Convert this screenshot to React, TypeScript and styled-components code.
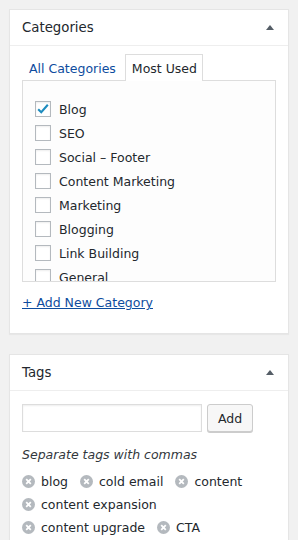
import React from "react";
import styled, { createGlobalStyle } from "styled-components";

const GlobalStyle = createGlobalStyle`
  html, body {
    margin: 0;
    padding: 0;
    background: #f1f1f1;
    font-family: "DejaVu Sans", "Liberation Sans", sans-serif;
    color: #32373c;
  }
`;

const Page = styled.div`
  padding: 9px 9px 0;
`;

/**
 * Meta box
 */
const Box = styled.div`
  background: #fff;
  border: 1px solid #e5e5e5;
  box-shadow: 0 1px 1px rgba(0, 0, 0, 0.04);
  margin-bottom: 20px;
`;

const BoxHeader = styled.div`
  display: flex;
  align-items: center;
  justify-content: space-between;
  height: 35px;
  padding: 0 14px 0 12px;
  border-bottom: 1px solid #eee;
`;

const BoxTitle = styled.h2`
  margin: 0;
  font-size: 13.3px;
  font-weight: 400;
  color: #23282d;
`;

const Toggle = styled.span`
  width: 0;
  height: 0;
  border-left: 4px solid transparent;
  border-right: 4px solid transparent;
  border-bottom: 5px solid #555d66;
`;

const BoxBody = styled.div<{ $top: number; $bottom: number }>`
  padding: ${(p) => p.$top}px 12px ${(p) => p.$bottom}px;
  font-size: 12.5px;
`;

/**
 * Categories
 */
const Tabs = styled.div`
  display: flex;
  align-items: flex-end;
  height: 27px;
  gap: 3px;
`;

const Tab = styled.div<{ $active?: boolean }>`
  height: 27px;
  box-sizing: border-box;
  display: flex;
  align-items: center;
  padding: 0 5px 0 6px;
  color: ${(p) => (p.$active ? "#23282d" : "#0e4c9e")};
  background: ${(p) => (p.$active ? "#fff" : "transparent")};
  border: 1px solid ${(p) => (p.$active ? "#ddd" : "transparent")};
  border-bottom: none;
  margin-bottom: -1px;
  position: relative;
  z-index: 1;
`;

const TabPanel = styled.div`
  height: 202px;
  box-sizing: border-box;
  border: 1px solid #ddd;
  background: #fdfdfd;
  overflow: hidden;
  padding: 20px 12px 0;
`;

const Row = styled.label`
  display: flex;
  align-items: center;
  gap: 8px;
  height: 16px;
  margin-bottom: 8px;
  color: #23282d;
`;

const Check = styled.span`
  width: 16px;
  height: 16px;
  box-sizing: border-box;
  border: 1px solid #b4b9be;
  background: #fff;
  box-shadow: inset 0 1px 2px rgba(0, 0, 0, 0.07);
  display: flex;
  align-items: center;
  justify-content: center;
  flex-shrink: 0;
`;

const AddLink = styled.a`
  display: block;
  margin-top: 13px;
  line-height: 16px;
  color: #0e4c9e;
  text-decoration: underline;
`;

/**
 * Tags
 */
const TagForm = styled.div`
  display: flex;
  gap: 5px;
`;

const TagInput = styled.input`
  width: 180px;
  height: 28px;
  box-sizing: border-box;
  border: 1px solid #ddd;
  box-shadow: inset 0 1px 2px rgba(0, 0, 0, 0.07);
  margin: 0;
  padding: 0 6px;
`;

const Button = styled.button`
  width: 46px;
  height: 28px;
  box-sizing: border-box;
  border: 1px solid #ccc;
  border-radius: 3px;
  background: #f7f7f7;
  box-shadow: 0 1px 0 #ccc;
  font-family: inherit;
  font-size: 12.5px;
  color: #23282d;
  padding: 0;
`;

const Hint = styled.p`
  margin: 15px 0 7px;
  font-style: italic;
  line-height: 16px;
  color: #32373c;
`;

const TagCloud = styled.div`
  display: flex;
  flex-wrap: wrap;
  column-gap: 12px;
`;

const Tag = styled.span`
  display: flex;
  align-items: center;
  gap: 6px;
  height: 23px;
  color: #23282d;
  white-space: nowrap;
`;

const categories = [
  "Blog",
  "SEO",
  "Social – Footer",
  "Content Marketing",
  "Marketing",
  "Blogging",
  "Link Building",
  "General",
];

const tags = [
  "blog",
  "cold email",
  "content",
  "content expansion",
  "content upgrade",
  "CTA",
];

const Tick = () => (
  <svg width="16" height="16" viewBox="0 0 16 16">
    <path
      d="M2.5 8.2 L6 11.6 L13.5 3.2"
      fill="none"
      stroke="#1e8cbe"
      strokeWidth="2.4"
    />
  </svg>
);

const Remove = () => (
  <svg width="13" height="13" viewBox="0 0 13 13">
    <circle cx="6.5" cy="6.5" r="6.5" fill="#b4b9be" />
    <path
      d="M4.2 4.2 L8.8 8.8 M8.8 4.2 L4.2 8.8"
      stroke="#fff"
      strokeWidth="1.8"
    />
  </svg>
);

export default function App() {
  return (
    <Page>
      <GlobalStyle />
      <Box>
        <BoxHeader>
          <BoxTitle>Categories</BoxTitle>
          <Toggle />
        </BoxHeader>
        <BoxBody $top={7} $bottom={22}>
          <Tabs>
            <Tab>All Categories</Tab>
            <Tab $active>Most Used</Tab>
          </Tabs>
          <TabPanel>
            {categories.map((c, i) => (
              <Row key={c}>
                <Check>{i === 0 && <Tick />}</Check>
                {c}
              </Row>
            ))}
          </TabPanel>
          <AddLink href="#">+ Add New Category</AddLink>
        </BoxBody>
      </Box>
      <Box>
        <BoxHeader>
          <BoxTitle>Tags</BoxTitle>
          <Toggle />
        </BoxHeader>
        <BoxBody $top={13} $bottom={12}>
          <TagForm>
            <TagInput />
            <Button>Add</Button>
          </TagForm>
          <Hint>Separate tags with commas</Hint>
          <TagCloud>
            {tags.map((t) => (
              <Tag key={t}>
                <Remove />
                {t}
              </Tag>
            ))}
          </TagCloud>
        </BoxBody>
      </Box>
    </Page>
  );
}
